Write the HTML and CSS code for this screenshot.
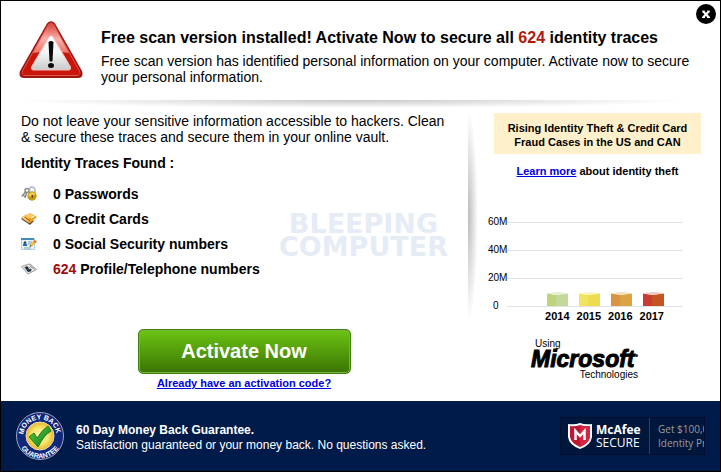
FILE: index.html
```html
<!DOCTYPE html>
<html lang="en">
<head>
<meta charset="utf-8">
<title>Free scan version installed</title>
<link rel="stylesheet" href="styles.css">
</head>
<body>
<div class="dialog">
  <button class="close" type="button" aria-label="Close">
    <svg width="20" height="20" viewBox="0 0 20 20"><circle cx="10" cy="10" r="10" fill="#000"/><path d="M7 7.200L13 13.500M13 7.200L7 13.500" stroke="#fff" stroke-width="2.200"/><path d="M6 7.200h3M11 7.200h3M6 13.500h3M11 13.500h3" stroke="#fff" stroke-width="1"/></svg>
  </button>

  <header class="header">
    <svg class="warning" width="66" height="60" viewBox="0 0 66 60" aria-hidden="true">
      <defs>
        <linearGradient id="red" x1="0" y1="0" x2="0" y2="1"><stop offset="0" stop-color="#d8423a"/><stop offset=".3" stop-color="#f8b0aa"/><stop offset=".6" stop-color="#ee6a60"/><stop offset="1" stop-color="#cf1a0c"/></linearGradient>
        <linearGradient id="silver" x1="0" y1="0" x2="0" y2="1"><stop offset="0" stop-color="#fff"/><stop offset=".5" stop-color="#f4f4f4"/><stop offset="1" stop-color="#c8cbcc"/></linearGradient>
      </defs>
      <path d="M29 3.500Q33-1 37 3.500L64 51Q66 57.500 60 58H6Q0 57.500 2 51Z" fill="#9c1712"/>
      <path d="M30 5Q33 1.500 36 5L61.500 51Q63 55 59 55.500H7Q3 55 4.500 51Z" fill="url(#red)" stroke="#e0554c" stroke-width="1"/>
      <path d="M4.500 52L15 33Q33 30 51 33L61.500 52Q62 55 59 55H7Q4 55 4.500 52Z" fill="#c9150a"/>
      <path d="M31 17Q33 14.500 35 17L52.500 47Q53 50 51 50H15Q13 50 13.500 47Z" fill="url(#silver)" stroke="#f6c0bb"/>
      <path d="M30.500 22Q33 20 35.500 22L34.500 41Q33 42 31.500 41Z" fill="#090909"/><ellipse cx="33" cy="45.500" rx="3" ry="2.500" fill="#090909"/>
    </svg>
    <div>
      <h1 class="title">Free scan version installed! Activate Now to secure all <span class="alert">624</span> identity traces</h1>
      <p class="copy">Free scan version has identified personal information on your computer. Activate now to secure your personal information.</p>
    </div>
  </header>
  <div class="rule"></div>

  <main class="main">
    <section class="traces">
      <p class="copy">Do not leave your sensitive information accessible to hackers. Clean &amp; secure these traces and secure them in your online vault.</p>
      <h2 class="found">Identity Traces Found :</h2>
      <div class="watermark" aria-hidden="true"><span>BLEEPING</span><span>COMPUTER</span></div>
      <ul class="list">
        <li>
          <svg width="16" height="16" viewBox="0 0 16 16"><g fill="none" stroke="#8b8b86" stroke-width="1.500"><circle cx="6" cy="4.500" r="2"/><path d="M4.500 6L.7 10.500M5.500 7L4 12M2 9l2 1.500M7 5l3 3"/></g><path d="M8.500 7V4Q8.500 1 11 1T14 4v4" fill="none" stroke="#aab6bf" stroke-width="1.500"/><circle cx="11" cy="10" r="4.700" fill="#c99b12"/><path d="M7 9Q10 5 14 7Q15 9 12 9Q9 12 7 9" fill="#ebcc50"/><path d="M10.500 9h1.500v3h-1.500z" fill="#695010"/></svg>
          <span>0 Passwords</span>
        </li>
        <li>
          <svg width="16" height="16" viewBox="0 0 16 16"><path d="M0 8L4 5L13 10L9 14Z" fill="#70492a"/><path d="M0 6.500L5 3L12 9L8 12Z" fill="#f0d082"/><path d="M3 6L9 2L16 6L9 12Z" fill="#ee9e22"/><path d="M4 5L9 2L12 4L7 8Z" fill="#ffc766"/><path d="M4 6L9 10" stroke="#a9571c"/><path d="M10 7l3-2" stroke="#fff0bc" stroke-width="2"/></svg>
          <span>0 Credit Cards</span>
        </li>
        <li>
          <svg width="16" height="16" viewBox="0 0 16 16"><path d="M.5 2.500h13v11H.5z" fill="#e8f2f8" stroke="#b8ccda"/><path d="M0 2h13v2H0z" fill="#438fb4"/><path d="M2 9Q2 7 4 7T6 9v1H2z" fill="#176f9f"/><circle cx="4" cy="6.500" r="1.300" fill="#354f60"/><path d="M7 6h4M7 8h3M3 12h7" stroke="#7aa5bd"/><path d="M8.500 11l1-3 4-4 2 2-4 4z" fill="#f4bc3c"/><path d="M13 4.500l2 2" stroke="#dc693b" stroke-width="2"/><path d="M8.500 11l1-2 1 1z" fill="#3b3026"/></svg>
          <span>0 Social Security numbers</span>
        </li>
        <li>
          <svg width="16" height="16" viewBox="0 0 16 16"><path d="M.5 5.500L9 3L15.500 8.500L7 13Z" fill="#eee" stroke="#999"/><path d="M2 5l5-2 8 6" fill="none" stroke="#bbb"/><path d="M3 6l3-.5 4 4-3 1.500z" fill="#537287"/><circle cx="6" cy="7" r="1.400" fill="#17232b"/><path d="M5.500 9l4-1 1 2-3 1z" fill="#202b33"/><path d="M9 5l4 3M8 6l3 3" stroke="#929292"/></svg>
          <span><span class="count">624</span> Profile/Telephone numbers</span>
        </li>
      </ul>
      <div class="actions">
        <button class="activate" type="button">Activate Now</button>
        <a class="link" href="#code">Already have an activation code?</a>
      </div>
    </section>

    <aside class="side">
      <p class="notice">Rising Identity Theft &amp; Credit Card Fraud Cases in the US and CAN</p>
      <p class="learn"><a class="link" href="#learn">Learn more</a> about identity theft</p>
      <div class="chart">
        <div class="axis"><span>60M</span><span>40M</span><span>20M</span><span class="zero">0</span></div>
        <div class="plot">
          <div class="bars">
            <svg width="21" height="14" viewBox="0 0 21 14"><path d="M0 1.500l9 1.500v11H0z" fill="#bfd37a"/><path d="M9 3l12-1.500V14H9z" fill="#c3d89b"/><path d="M0 1L10 0l11 1-11 2z" fill="#e6efcf"/></svg>
            <svg width="21" height="14" viewBox="0 0 21 14"><path d="M0 1.500l9 1.500v11H0z" fill="#f3e362"/><path d="M9 3l12-1.500V14H9z" fill="#eddb50"/><path d="M0 1L10 0l11 1-11 2z" fill="#fbf4bd"/></svg>
            <svg width="21" height="14" viewBox="0 0 21 14"><path d="M0 1.500l9 1.500v11H0z" fill="#da9343"/><path d="M9 3l12-1.500V14H9z" fill="#daa445"/><path d="M0 1L10 0l11 1-11 2z" fill="#f4dfbd"/></svg>
            <svg width="21" height="14" viewBox="0 0 21 14"><path d="M0 1.500l9 1.500v11H0z" fill="#c83c32"/><path d="M9 3l12-1.500V14H9z" fill="#c65322"/><path d="M0 1L10 0l11 1-11 2z" fill="#efc6c5"/></svg>
          </div>
          <div class="years"><span>2014</span><span>2015</span><span>2016</span><span>2017</span></div>
        </div>
      </div>
      <div class="microsoft"><span class="using">Using</span><strong>Microsoft</strong><span class="tech">Technologies</span></div>
    </aside>
  </main>

  <footer class="footer">
    <svg class="seal" width="50" height="50" viewBox="0 0 50 50" aria-label="Money back guarantee">
      <defs>
        <radialGradient id="gold"><stop offset="0" stop-color="#fff9bc"/><stop offset=".6" stop-color="#f8e46a"/><stop offset="1" stop-color="#e3b52c"/></radialGradient>
        <linearGradient id="tick" x1="0" y1="0" x2="1" y2="1"><stop offset="0" stop-color="#5fcf3a"/><stop offset="1" stop-color="#087b1d"/></linearGradient>
        <path id="top" d="M9.300 30A16.500 16.500 0 1 1 41 29"/>
        <path id="bottom" d="M2.500 27A22.500 22.500 0 0 0 47.300 27"/>
      </defs>
      <circle cx="25" cy="25" r="23.500" fill="#10277c" stroke="#9aa7c4" stroke-width="1"/>
      <circle cx="25" cy="25" r="14" fill="url(#gold)" stroke="#e8ddb2"/>
      <text class="seal-text"><textPath href="#top" startOffset="50%" text-anchor="middle">MONEY BACK</textPath></text>
      <text class="seal-text"><textPath href="#bottom" startOffset="50%" text-anchor="middle">GUARANTEE</textPath></text>
      <path d="M14 26L19 22L22 27Q28 18 33 15L36 20Q29 24 23 36Z" fill="url(#tick)" stroke="#247926"/>
    </svg>
    <p class="guarantee"><strong>60 Day Money Back Guarantee.</strong><br>Satisfaction guaranteed or your money back. No questions asked.</p>
    <div class="mcafee">
      <svg width="26" height="28" viewBox="0 0 26 28" aria-hidden="true"><path d="M1 2Q8 3 13 1Q18 3 25 2V15Q24 23 13 27Q2 23 1 15Z" fill="#fff"/><path d="M3 4Q8 5 13 3Q18 5 23 4V15Q22 21 13 25Q4 21 3 15Z" fill="#bd1734"/><path d="M13 3Q18 5 23 4V15Q22 21 13 25Z" fill="#d62542"/><path d="M8.500 18V9l4.500 5 4.500-5v9" fill="none" stroke="#fff" stroke-width="2.500"/></svg>
      <div class="brand"><strong>McAfee</strong><span>SECURE</span></div>
      <div class="offer"><span>Get $100,000</span><span>Identity Protection</span></div>
    </div>
  </footer>
</div>
</body>
</html>
```
FILE: styles.css
```css
* { box-sizing: border-box; }
body { margin: 0; background: #fff; color: #000; font-family: "Liberation Sans", Arial, sans-serif; font-size: 14px; line-height: 16px; }
h1, h2, p, ul { margin: 0; padding: 0; }
svg { display: block; flex: none; }
button { font-family: inherit; cursor: pointer; }
.dialog { position: relative; display: flex; flex-direction: column; min-height: 100vh; border: 1px solid #000; }
.close { position: absolute; top: 3px; right: 4px; padding: 0; border: 0; background: none; }
.header { display: flex; gap: 17px; padding: 19px 16px 15px 17px; }
.header > div { padding-top: 8px; }
.title { font-size: 16px; line-height: 20px; margin-bottom: 5px; }
.alert { color: #b3190b; }
.rule { height: 8px; margin: 0 32px 0 16px; background: radial-gradient(ellipse 50% 100% at 50% 0, #c8c8c8, #fff); }
.main { display: flex; flex: 1; }
.traces { position: relative; flex: 1; padding: 5px 12px 0 20px; }
.found { margin: 10px 0 10px; font-size: 14px; line-height: 16px; }
.list { list-style: none; font-weight: bold; }
.list li { display: flex; align-items: center; gap: 16px; height: 25px; }
.count { color: #a00d0d; }
.watermark { position: absolute; top: 104px; right: 20px; display: flex; flex-direction: column; align-items: center; color: #e5ecf6; font: bold 27px/23px "DejaVu Sans", sans-serif; }
.actions { display: flex; flex-direction: column; align-items: center; padding: 48px 0 0 11px; }
.activate { width: 213px; height: 45px; border: 1px solid #3f850b; border-radius: 5px; background: linear-gradient(#6cc414, #3b7403); box-shadow: inset 0 0 0 1px #79b23f; color: #fff; font-size: 20px; font-weight: bold; }
.link { color: #00d; text-decoration: underline; }
.actions .link { margin-top: 2px; font-size: 11px; font-weight: bold; line-height: 14px; }
.side { flex: 0 0 252px; padding: 5px 19px 0 26px; font-size: 11px; font-weight: bold; background: radial-gradient(ellipse 10px 106px at 0 50%, #bbb, #fff) 0 2px / 10px 212px no-repeat; }
.notice { padding: 8px 8px 5px; background: #fff0cb; line-height: 14px; text-align: center; }
.learn { margin-top: 9px; text-align: center; }
.chart { display: flex; margin-top: 36px; padding-right: 18px; }
.axis { display: grid; grid-auto-rows: 28px; width: 19px; margin-left: -6px; font-size: 10px; font-weight: normal; line-height: 14px; }
.zero { padding-left: 5px; }
.plot { flex: 1; padding-top: 7px; }
.bars { display: flex; justify-content: flex-end; align-items: flex-end; gap: 11px; height: 85px; padding: 0 19px 1px 0; background: repeating-linear-gradient(#e2e2e2 0 1px, transparent 1px 28px); }
.years { display: flex; justify-content: flex-end; gap: 7px; padding: 1px 19px 0 0; }
.microsoft { display: flex; flex-direction: column; width: 107px; margin: 11px auto 0 37px; font-weight: normal; }
.using { padding-left: 4px; font-size: 10px; line-height: 11px; }
.microsoft strong { position: relative; font-size: 23px; font-style: italic; line-height: 21px; -webkit-text-stroke: 1px #000; }
.microsoft strong::after { content: ""; position: absolute; top: 5px; right: 0; width: 3px; height: 3px; border-radius: 50%; background: #222; }
.tech { align-self: flex-end; font-size: 10px; line-height: 10px; }
.footer { display: flex; align-items: center; height: 70px; padding: 0 15px 0 14px; background: #001b49; color: #fff; }
.seal-text { fill: #fff; font-size: 7px; font-weight: bold; }
.guarantee { margin: 4px auto 0 11px; font-size: 12px; line-height: 15px; }
.mcafee { display: flex; align-items: center; width: 145px; height: 38px; padding-left: 6px; overflow: hidden; border: 1px solid #00102e; background: #00163b; font-family: "Open Sans", sans-serif; }
.brand { display: flex; flex: none; flex-direction: column; width: 53px; margin-left: 3px; font-size: 12px; line-height: 13px; }
.offer { display: flex; flex: none; flex-direction: column; align-self: stretch; justify-content: center; padding-left: 8px; border-left: 1px solid #34405a; color: #9b9b9b; font-size: 10px; line-height: 14px; white-space: nowrap; }
```
